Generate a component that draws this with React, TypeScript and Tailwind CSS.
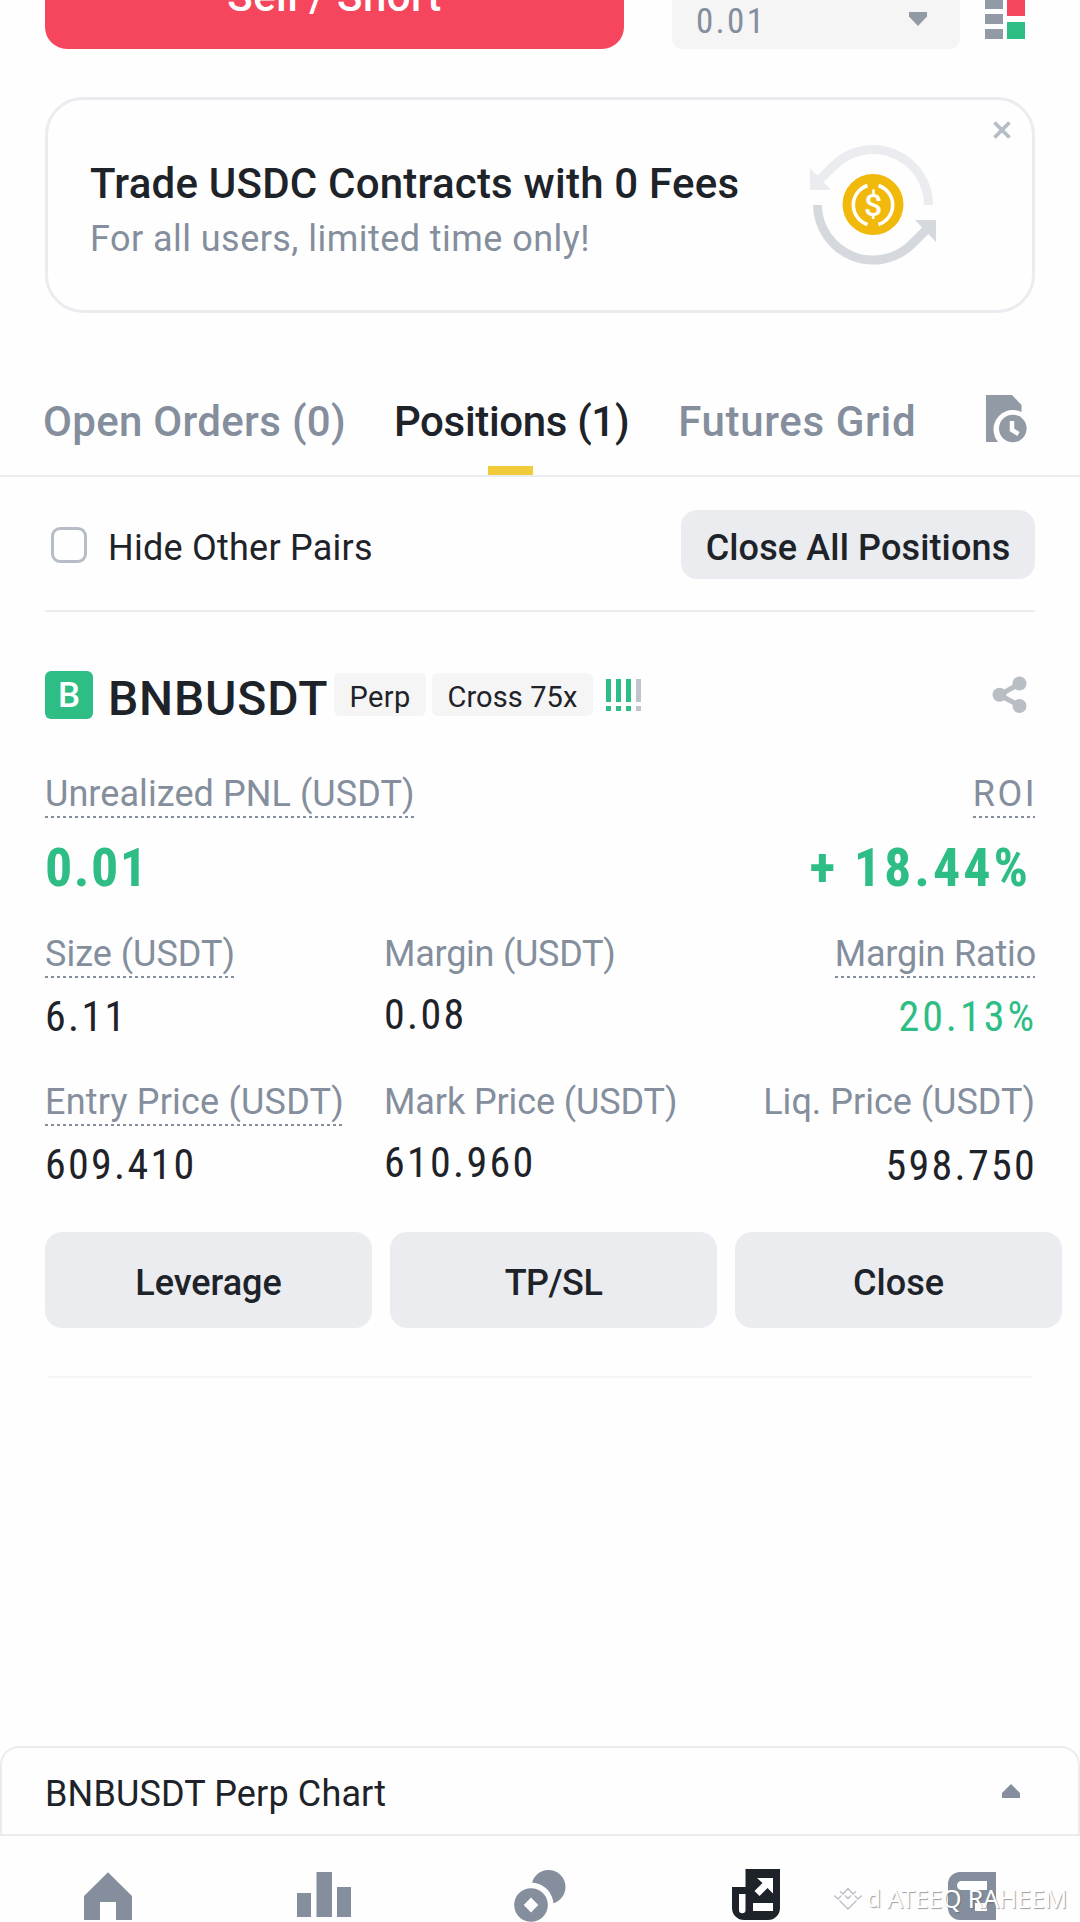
import type { ReactNode } from "react";

interface StatProps {
  label: string;
  value: string;
  labelClass?: string;
  valueClass?: string;
  underline?: boolean;
  right?: boolean;
}

const DashedLabel = ({ children, className = "", underline = true }: { children: ReactNode; className?: string; underline?: boolean }) => (
  <div className="inline-flex flex-col">
    <span className={`text-[36px] leading-[44px] whitespace-nowrap text-[#848e9c] ${className}`}>{children}</span>
    {underline && (
      <span className="h-[2px] w-full bg-[repeating-linear-gradient(90deg,#848e9c_0_3px,transparent_3px_6px)]" />
    )}
  </div>
);

const Stat = ({ label, value, labelClass = "", valueClass = "mt-[14px] tracking-[2.3px] text-[#1e2329]", underline = false, right = false }: StatProps) => (
  <div className={`flex flex-col ${right ? "items-end" : "items-start"}`}>
    <DashedLabel className={labelClass} underline={underline}>{label}</DashedLabel>
    <span className={`font-stretch-condensed text-[42px] leading-[50px] ${valueClass}`}>{value}</span>
  </div>
);

const OrderBookIcon = () => (
  <svg width="41" height="39" viewBox="0 0 41 39">
    <path d="M0 0h18v9H0zM0 14h18v10H0zM0 29h18v10H0z" fill="#929aa5" />
    <path d="M22 0h18v16H22z" fill="#f6465d" />
    <path d="M22 22h18v17H22z" fill="#2ebd85" />
  </svg>
);

const UsdcIcon = () => (
  <svg width="128" height="118" viewBox="810 145 128 118" className="overflow-visible">
    <path d="M928.5 205A55.5 55.5 0 0 0 834 165.500L819 180.500" fill="none" stroke="#eaecef" strokeWidth="9" />
    <path d="M810 168v22h21z" fill="#eaecef" />
    <path d="M817.500 205A55.5 55.5 0 0 0 912 244L927 229" fill="none" stroke="#d5d9de" strokeWidth="9" />
    <path d="M936 242v-22h-21z" fill="#d5d9de" />
    <circle cx="873" cy="204.500" r="30.500" fill="#f0b90b" />
    <path d="M867.500 185.500A20.500 20.500 0 0 0 867.500 224.500M878.500 185.500A20.500 20.500 0 0 1 878.500 224.500" fill="none" stroke="#fff" strokeWidth="3.600" />
    <text x="873" y="216" textAnchor="middle" fontSize="32" fontWeight="500" fill="#fff">$</text>
  </svg>
);

const HistoryIcon = () => (
  <svg width="41" height="48" viewBox="0 0 41 48">
    <path d="M0 0h26l9.500 10v37H0z" fill="#929aa5" />
    <circle cx="27" cy="34.500" r="19.500" fill="#fefefe" />
    <circle cx="26.800" cy="33.500" r="13.800" fill="#929aa5" />
    <path d="M26 26v9l6.500 4" fill="none" stroke="#fefefe" strokeWidth="4.500" />
  </svg>
);

const ShareIcon = () => (
  <svg width="36" height="38" viewBox="0 0 36 38">
    <path d="M28 7.500L7.500 19L28 30" fill="none" stroke="#b9bdc4" strokeWidth="5" />
    <circle cx="27.500" cy="7.500" r="7" fill="#b9bdc4" />
    <circle cx="7.500" cy="18.800" r="7" fill="#b9bdc4" />
    <circle cx="27.500" cy="30" r="7" fill="#b9bdc4" />
  </svg>
);

const tabs = [
  { name: "Open Orders (0)", active: false, cls: "tracking-[0.3px] text-[#848e9c]" },
  { name: "Positions (1)", active: true, cls: "tracking-[-0.34px] text-[#1e2329]" },
  { name: "Futures Grid", active: false, cls: "pl-px tracking-[0.65px] text-[#848e9c]" },
];

const actions = [
  { name: "Leverage", cls: "" },
  { name: "TP/SL", cls: "tracking-[-0.5px]" },
  { name: "Close", cls: "" },
];

export default function App() {
  return (
    <div className="relative flex h-[1922px] w-[1080px] flex-col overflow-hidden bg-[#fefefe] font-['Roboto',sans-serif] text-[#1e2329]">
      {/* Order form, scrolled mostly out of view */}
      <div className="flex h-[49px] shrink-0 items-end overflow-hidden pl-[45px]">
        <button className="flex h-[105px] w-[579px] items-center justify-center rounded-[22px] bg-[#f6465d] text-[42px] font-medium tracking-[0.45px] text-white">
          Sell / Short
        </button>
        <div className="ml-12 flex h-[49px] w-[288px] items-start justify-between rounded-b-[10px] bg-[#f5f5f5] pr-[33px] pl-6">
          <span className="font-stretch-condensed text-[35px] leading-[44px] tracking-[2.3px] text-[#848e9c]">0.01</span>
          <svg width="18" height="14" viewBox="0 0 18 14" className="mt-3">
            <path d="M0 0h18v4.500L9 14L0 4.500z" fill="#929aa5" />
          </svg>
        </div>
        <div className="ml-[25px] self-start">
          <OrderBookIcon />
        </div>
      </div>

      {/* Promo banner */}
      <div className="mx-[45px] mt-12 flex h-[216px] shrink-0 rounded-[38px] border-[3px] border-[#eaecef]">
        <div className="w-[722px] pt-[56px] pl-[42px]">
          <p className="text-[42px] leading-[56px] font-medium tracking-[0.22px] whitespace-nowrap">Trade USDC Contracts with 0 Fees</p>
          <p className="mt-[3px] text-[36px] leading-[48px] tracking-[0.45px] text-[#848e9c]">For all users, limited time only!</p>
        </div>
        <div className="mt-[45px] ml-[40px]">
          <UsdcIcon />
        </div>
        <svg width="18" height="18" viewBox="0 0 18 18" className="mt-[21px] ml-[55px]">
          <path d="M1.500 1.500l15 15M16.500 1.500l-15 15" stroke="#b7bdc6" strokeWidth="3.800" />
        </svg>
      </div>

      {/* Tabs */}
      <div className="flex h-[164px] shrink-0 items-end gap-12 border-b-2 border-[#eaecef] pl-[43px]">
        {tabs.map((tab) => (
          <div key={tab.name} className="flex h-[83px] flex-col items-center justify-between">
            <span className={`text-[42px] leading-[60px] font-medium whitespace-nowrap ${tab.cls}`}>{tab.name}</span>
            {tab.active && <span className="mr-[2px] h-[9px] w-[45px] bg-[#f2cb3b]" />}
          </div>
        ))}
        <div className="mr-[53px] ml-auto self-start pt-[82px]">
          <HistoryIcon />
        </div>
      </div>

      {/* Filter row */}
      <div className="mx-[45px] flex h-[135px] shrink-0 items-center border-b-2 border-[#eaecef]">
        <span className="mt-[3px] ml-[6px] h-9 w-9 rounded-[9px] border-[3px] border-[#b7bdc6]" />
        <span className="mt-[8px] ml-[21px] text-[36px] leading-[44px] tracking-[0.24px]">Hide Other Pairs</span>
        <button className="mt-[2px] ml-auto h-[69px] w-[354px] rounded-[16px] bg-[#eaecef] pt-[8px] text-[36px] leading-[61px] font-medium tracking-[0.14px]">
          Close All Positions
        </button>
      </div>

      {/* Position header */}
      <div className="mx-[45px] mt-[59px] flex h-12 shrink-0 items-center">
        <span className="flex h-12 w-12 items-center justify-center rounded-[6px] bg-[#2ebd85] pt-[3px] text-[35px] font-medium text-white">B</span>
        <span className="mt-[7px] ml-[15px] w-[226px] text-[48px] leading-[56px] font-medium tracking-[0.8px]">BNBUSDT</span>
        <span className="-mt-px h-[43px] w-[92px] rounded-[6px] bg-[#f5f5f5] pt-[5px] text-center text-[29px] leading-[38px] tracking-[0.4px]">Perp</span>
        <span className="-mt-px ml-[6px] h-[43px] w-[161px] rounded-[6px] bg-[#f5f5f5] pt-[5px] text-center text-[29px] leading-[38px] tracking-[0.1px]">Cross 75x</span>
        <svg width="35" height="32" viewBox="0 0 35 32" className="ml-[13px]">
          <path d="M0 0h5v23H0zM0 27h5v5H0zM10 0h5v23h-5zM10 27h5v5h-5zM20 0h5v23h-5zM20 27h5v5h-5z" fill="#2ebd85" />
          <path d="M30 0h5v23h-5zM30 27h5v5h-5z" fill="#c1c5cb" />
        </svg>
        <div className="mr-[7px] ml-auto">
          <ShareIcon />
        </div>
      </div>

      {/* PNL */}
      <div className="mx-[45px] mt-[53px] flex shrink-0 justify-between">
        <div className="flex flex-col items-start">
          <DashedLabel className="tracking-[0.07px]">Unrealized PNL (USDT)</DashedLabel>
          <span className="mt-5 font-stretch-condensed text-[54px] leading-[60px] font-bold tracking-[1.5px] text-[#2ebd85]">0.01</span>
        </div>
        <div className="flex flex-col items-end">
          <DashedLabel className="-mr-[2px] tracking-[2.5px]">ROI</DashedLabel>
          <span className="mt-5 mr-[4px] font-stretch-condensed text-[54px] leading-[60px] font-bold tracking-[3px] text-[#2ebd85]">+ 18.44%</span>
        </div>
      </div>

      <div className="mx-[45px] mt-[34px] grid h-[148px] shrink-0 grid-cols-[339px_1fr_auto]">
        <Stat label="Size (USDT)" value="6.11" underline />
        <Stat label="Margin (USDT)" value="0.08" labelClass="tracking-[-0.25px]" />
        <Stat label="Margin Ratio" value="20.13%" labelClass="-mr-px tracking-[-0.18px]" valueClass="mt-[14px] -mr-[2px] tracking-[3px] text-[#2ebd85]" underline right />
      </div>
      <div className="mx-[45px] grid h-[152px] shrink-0 grid-cols-[339px_1fr_auto]">
        <Stat label="Entry Price (USDT)" value="609.410" labelClass="tracking-[0.2px]" underline />
        <Stat label="Mark Price (USDT)" value="610.960" labelClass="tracking-[-0.1px]" />
        <Stat label="Liq. Price (USDT)" value="598.750" valueClass="mt-[17px] -mr-[2px] tracking-[2.3px]" right />
      </div>

      <div className="ml-[45px] flex shrink-0 gap-[18px]">
        {actions.map((a) => (
          <button key={a.name} className={`h-24 w-[327px] rounded-[17px] bg-[#eaecef] pt-[5px] text-[36px] font-medium ${a.cls}`}>
            {a.name}
          </button>
        ))}
      </div>
      <div className="mx-12 mt-12 h-[2px] shrink-0 bg-[#f5f5f5]" />

      {/* Chart drawer */}
      <div className="mt-auto flex h-[90px] shrink-0 items-center justify-between rounded-t-[19px] border-2 border-[#eaecef] pr-[58px] pl-[43px]">
        <span className="mt-[5px] text-[36px] leading-[44px] tracking-[0.14px]">BNBUSDT Perp Chart</span>
        <svg width="18" height="14" viewBox="0 0 18 14">
          <path d="M0 14h18V9L9 0L0 9z" fill="#848e9c" />
        </svg>
      </div>

      {/* Bottom navigation */}
      <nav className="flex h-[86px] shrink-0 justify-around pt-[33px]">
        <svg width="60" height="53" viewBox="78 1869 60 53">
          <path d="M84 1896L108 1872.300L132 1896V1920H116V1902H100V1920H84z" fill="#848e9c" />
        </svg>
        <svg width="60" height="53" viewBox="294 1869 60 53">
          <path d="M297 1893h14v24h-14zM316.500 1872h15.500v45h-15.500zM337 1887h14v30h-14z" fill="#848e9c" />
        </svg>
        <svg width="60" height="53" viewBox="510 1869 60 53">
          <circle cx="548.500" cy="1887" r="17" fill="#848e9c" />
          <circle cx="531" cy="1905" r="22.500" fill="#fefefe" />
          <circle cx="531" cy="1905" r="16.800" fill="#848e9c" />
          <path d="M531 1897.500l7.300 7.500l-7.300 7.500l-7.300-7.500z" fill="#fefefe" />
        </svg>
        <svg width="60" height="53" viewBox="726 1869 60 53">
          <path d="M745.500 1869H780V1908a12 12 0 0 1-12 12H744a12 12 0 0 1-12-12V1887h13.500z" fill="#1e2329" />
          <path d="M739 1894h6.500v16a3.250 3.250 0 0 1-6.500 0zM753 1903h20v8h-20zM757 1878h16v15.500l-5.500-5.500l-8 8l-5-5l8-8z" fill="#fff" />
        </svg>
        <svg width="60" height="53" viewBox="942 1869 60 53">
          <path d="M996 1872V1920H960a12 12 0 0 1-12-12V1884a12 12 0 0 1 12-12z" fill="#848e9c" />
          <path d="M961.500 1881H987v9h-25.500a4.500 4.500 0 0 1 0-9zM975 1903h12v8h-12z" fill="#fff" />
        </svg>
      </nav>

      {/* Watermark */}
      <div className="absolute right-[13px] bottom-[7px] flex items-center text-white [text-shadow:1px_1px_1px_rgba(90,98,110,0.6)]">
        <svg width="28" height="24" viewBox="0 0 28 24" fill="none" stroke="#b9bec6" strokeWidth="1.300">
          <path d="M6 5.500l3 2.500L14 2.500L19 8l3-2.500M0 9.500l4 3.500l3.500-3.500M28 9.500L24 13l-3.500-3.500M11 9.500l3 3l3-3M5.500 14.500l8.500 8.500l8.500-8.500" />
        </svg>
        <span className="ml-[5px] font-['Noto_Sans',sans-serif] text-[23px] leading-[34px]">d</span>
        <span className="ml-[6px] font-['Noto_Sans',sans-serif] text-[25px] leading-[34px] tracking-[-0.2px]">ATEEQ RAHEEM</span>
      </div>
    </div>
  );
}
